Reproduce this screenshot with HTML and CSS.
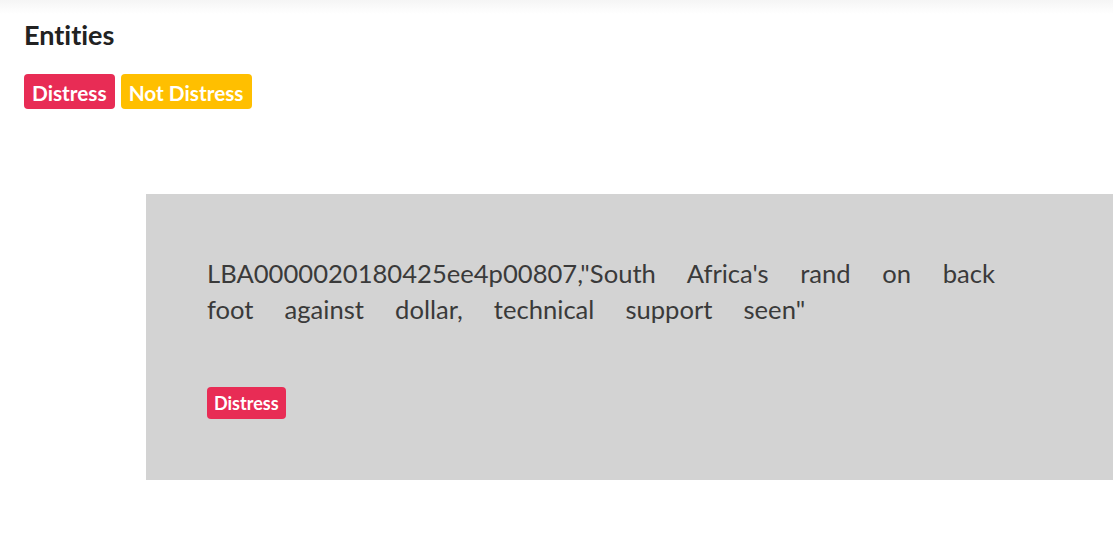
FILE: index.html
```html
<!DOCTYPE html>
<html lang="en">
<head>
<meta charset="utf-8">
<title>Entities</title>
<link rel="stylesheet" href="styles.css">
</head>
<body>
<main class="page">
  <h2 class="title">Entities</h2>
  <div class="legend">
    <span class="badge badge-distress">Distress</span>
    <span class="badge badge-not">Not Distress</span>
  </div>
  <section class="card">
    <p class="card-text">LBA0000020180425ee4p00807,"South Africa's rand on back foot against dollar, technical support seen"</p>
    <span class="tag badge-distress">Distress</span>
  </section>
</main>
</body>
</html>
```

FILE: styles.css
```css
html, body {
  margin: 0;
  padding: 0;
}
body {
  font-family: Lato, "Open Sans", sans-serif;
  font-variant-ligatures: none;
  color: #222;
  background: #fff linear-gradient(#f5f5f5, #ffffff 14px) no-repeat;
  overflow-x: hidden;
}
.page {
  padding: 0 24px;
}
.title {
  margin: 19px 0 0;
  font-size: 27px;
  font-weight: 700;
  line-height: 32.4px;
  color: #222;
}
.legend {
  display: flex;
  gap: 6px;
  margin-top: 22.6px;
}
.badge {
  display: inline-block;
  font-size: 20.8px;
  font-weight: 700;
  line-height: 25px;
  padding: 6px 8px 4px;
  border-radius: 4px;
  color: #fff;
}
.badge-distress {
  background: #e82c55;
}
.badge-not {
  background: #ffbf00;
}
.card {
  margin: 85px -24px 0 122px;
  background: #d3d3d3;
  padding: 61px 61px 61px 61px;
}
.card-text {
  margin: 0 0 60px;
  max-width: 788px;
  font-size: 25.6px;
  line-height: 36px;
  word-spacing: 24.5px;
  text-align: justify;
  color: #3a3a3a;
}
.tag {
  display: inline-block;
  font-size: 18px;
  font-weight: 700;
  line-height: 23px;
  padding: 5px 7px 4px;
  border-radius: 4px;
  color: #fff;
}
```
